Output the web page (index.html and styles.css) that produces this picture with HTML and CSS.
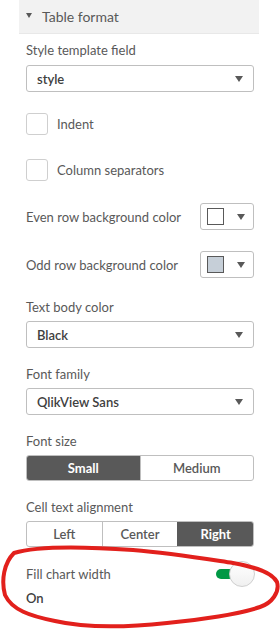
FILE: index.html
```html
<!DOCTYPE html>
<html lang="en">
<head>
    <meta charset="UTF-8">
    <meta name="viewport" content="width=device-width, initial-scale=1.0">
    <title>Table format</title>
    <link rel="stylesheet" href="styles.css">
</head>
<body>

    <div class="panel">
        <div class="panel-head">
            <span class="caret"></span>
            <span>Table format</span>
        </div>

        <div class="panel-body">
            <div class="field first">
                <div class="label">Style template field</div>
                <div class="select"><span>style</span><span class="arrow"></span></div>
            </div>

            <div class="check check-first"><span class="box"></span>Indent</div>
            <div class="check"><span class="box"></span>Column separators</div>

            <div class="color-row even">
                <span class="label">Even row background color</span>
                <div class="color-btn"><span class="swatch"></span><span class="arrow"></span></div>
            </div>
            <div class="color-row odd">
                <span class="label">Odd row background color</span>
                <div class="color-btn"><span class="swatch grey"></span><span class="arrow"></span></div>
            </div>

            <div class="field after-color">
                <div class="label">Text body color</div>
                <div class="select"><span>Black</span><span class="arrow"></span></div>
            </div>

            <div class="field">
                <div class="label">Font family</div>
                <div class="select"><span>QlikView Sans</span><span class="arrow"></span></div>
            </div>

            <div class="field">
                <div class="label">Font size</div>
                <div class="segments">
                    <span class="seg active">Small</span>
                    <span class="seg">Medium</span>
                </div>
            </div>

            <div class="field">
                <div class="label">Cell text alignment</div>
                <div class="segments">
                    <span class="seg">Left</span>
                    <span class="seg">Center</span>
                    <span class="seg active">Right</span>
                </div>
            </div>

            <div class="switch-row">
                <div>
                    <div class="label">Fill chart width</div>
                    <div class="state">On</div>
                </div>
                <div class="switch"><span class="track"></span><span class="knob"></span></div>
            </div>
        </div>
    </div>

    <!-- hand drawn marker around the switch -->
    <svg class="marker" width="280" height="633" viewBox="0 0 280 633">
        <path d="M14 553 C 40 545, 90 547, 133 550 C 170 553, 200 558, 233 563 C 255 567, 272 572, 277 582 C 280 592, 272 603, 260 607 C 240 614, 200 620, 167 623 C 130 627, 90 629, 55 621 C 30 616, 12 610, 5 595 C 1 580, 4 563, 14 553 Z"
              fill="none" stroke="#e2201c" stroke-width="4" stroke-linecap="round"/>
    </svg>

</body>
</html>
```

FILE: styles.css
```css
body {
    margin: 0;
    font-family: "Source Sans Pro", Lato, "Noto Sans", sans-serif;
    font-size: 13px;
    color: #595959;
    background: #fff;
}

.panel {
    margin-left: 19px;
    width: 240px;
}

.panel-head {
    height: 33px;
    background: #f2f2f2;
    border-bottom: 1px solid #e8e8e8;
    display: flex;
    align-items: center;
    padding-left: 7px;
    font-size: 14px;
}

.caret {
    width: 0;
    height: 0;
    border-left: 3px solid transparent;
    border-right: 3px solid transparent;
    border-top: 5px solid #595959;
    margin-right: 10px;
    margin-top: -2px;
}

.panel-body {
    padding: 0 5px 0 7px;
}

.label {
    line-height: 16px;
}

.field {
    margin-top: 18px;
}

.field.first {
    margin-top: 8px;
}

.field.after-color {
    margin-top: 21px;
}

.field .label {
    margin-bottom: 6px;
}

.field.first .label {
    margin-bottom: 7px;
}

.select {
    height: 25px;
    border: 1px solid #bfbfbf;
    border-radius: 3px;
    display: flex;
    align-items: center;
    justify-content: space-between;
    padding: 0 10px 0 10px;
    color: #404040;
    font-weight: 600;
}

.arrow {
    width: 0;
    height: 0;
    border-left: 4px solid transparent;
    border-right: 4px solid transparent;
    border-top: 6px solid #595959;
}

.check {
    display: flex;
    align-items: center;
    height: 22px;
    margin-top: 24px;
}

.check-first {
    margin-top: 21px;
}

.box {
    width: 20px;
    height: 20px;
    border: 1px solid #cfcfcf;
    border-radius: 3px;
    margin-right: 9px;
}

.color-row {
    display: flex;
    align-items: center;
    justify-content: space-between;
}

.color-row.even {
    margin-top: 22px;
}

.color-row.odd {
    margin-top: 21px;
}

.color-btn {
    box-sizing: border-box;
    width: 54px;
    height: 27px;
    border: 1px solid #bfbfbf;
    border-radius: 3px;
    display: flex;
    align-items: center;
    padding-left: 6px;
}

.swatch {
    width: 15px;
    height: 15px;
    border: 1px solid #595959;
    background: #fff;
    margin-right: 13px;
}

.swatch.grey {
    background: #c6cfd8;
}

.segments {
    display: flex;
    height: 24px;
    border: 1px solid #bfbfbf;
    border-radius: 3px;
    overflow: hidden;
}

.seg {
    flex: 1;
    display: flex;
    align-items: center;
    justify-content: center;
    font-weight: 600;
    color: #595959;
    border-left: 1px solid #bfbfbf;
}

.seg:first-child {
    border-left: none;
}

.seg.active {
    background: #595959;
    color: #fff;
    font-weight: 700;
    border-color: #595959;
}

.switch-row {
    margin-top: 19px;
    display: flex;
    justify-content: space-between;
    align-items: flex-start;
}

.state {
    margin-top: 8px;
    line-height: 16px;
    color: #404040;
    font-weight: 600;
}

.switch {
    position: relative;
    width: 40px;
    height: 26px;
    margin-top: -5px;
    margin-right: -1px;
}

.track {
    position: absolute;
    left: 1px;
    top: 8px;
    width: 30px;
    height: 10px;
    border-radius: 5px;
    background: #009845;
}

.knob {
    position: absolute;
    right: 0;
    top: 0;
    width: 24px;
    height: 24px;
    border-radius: 50%;
    background: linear-gradient(#fff, #f0f0f0);
    border: 1px solid #cfcfcf;
}

.marker {
    position: absolute;
    left: 0;
    top: 0;
    pointer-events: none;
}
```
